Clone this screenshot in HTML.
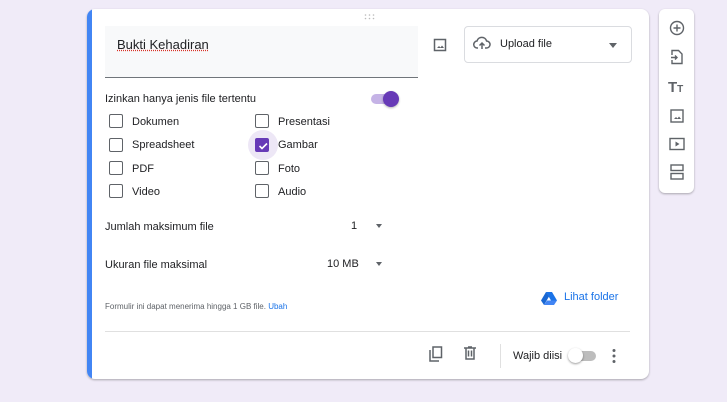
<!DOCTYPE html><html><head><style>
body{margin:0;width:727px;height:407px;background:#fff;font-family:"Liberation Sans",Arial,sans-serif;position:relative;overflow:hidden;color:#202124}
.bg{position:absolute;left:0;top:0;width:727px;height:402px;background:#f0ebf8}
.a{position:absolute}
.card{left:87px;top:9px;width:562px;height:370px;background:#fff;border-radius:8px;box-shadow:0 1px 2px rgba(0,0,0,.3);overflow:hidden}
.bar{left:0;top:0;width:5px;height:370px;background:#4285f4}
.t{font-size:11px;position:absolute}
.cb{position:absolute;width:12px;height:12px;border:1.7px solid #5f6368;border-radius:2px}
.side{left:659px;top:9px;width:35px;height:184px;background:#fff;border-radius:6px;box-shadow:0 1px 2px rgba(0,0,0,.3)}
</style></head><body>
<div class="bg"></div>
<div class="a card">
<div class="a bar"></div>
<svg class="a" style="left:277px;top:5px" width="12" height="6" viewBox="0 0 12 6"><g fill="#bbb"><circle cx="1.5" cy="1" r=".8"/><circle cx="5.5" cy="1" r=".8"/><circle cx="9.5" cy="1" r=".8"/><circle cx="1.5" cy="4.5" r=".8"/><circle cx="5.5" cy="4.5" r=".8"/><circle cx="9.5" cy="4.5" r=".8"/></g></svg>
<div class="a" style="left:18px;top:17px;width:313px;height:51px;background:#f8f9fa;border-bottom:1px solid #70757a"></div>
<div class="a" style="left:30px;top:28px;font-size:13px;text-decoration:underline dotted #d93025">Bukti Kehadiran</div>
<svg class="a" style="left:346px;top:29px" width="14" height="14" viewBox="0 0 14 14"><rect x="1.5" y="1.5" width="11" height="11" fill="none" stroke="#5f6368" stroke-width="1.5"/><path d="M4 10l2-2 1.5 1.5 1.5-2 2 2.5z" fill="#5f6368"/></svg>
<div class="a" style="left:377px;top:17px;width:166px;height:35px;border:1px solid #dadce0;border-radius:4px"></div>
<svg class="a" style="left:386px;top:27px" width="18" height="14" viewBox="0 0 18 14"><path d="M5 12H4.5a3.5 3.5 0 0 1-.5-7A5 5 0 0 1 13.6 5 3.5 3.5 0 0 1 13.5 12H12" fill="none" stroke="#5f6368" stroke-width="1.5"/><path d="M9 13V7M6.5 9.5L9 7l2.5 2.5" fill="none" stroke="#5f6368" stroke-width="1.5"/></svg>
<div class="t" style="left:413px;top:29px">Upload file</div>
<div class="a" style="left:522px;top:34px;border:4px solid transparent;border-top:5px solid #5f6368;border-bottom:0"></div>
<div class="t" style="left:18px;top:84px">Izinkan hanya jenis file tertentu</div>
<div class="a" style="left:284px;top:85px;width:26px;height:10px;border-radius:5px;background:#c5b3e6"></div>
<div class="a" style="left:296px;top:82px;width:16px;height:16px;border-radius:50%;background:#673ab7;box-shadow:0 1px 2px rgba(0,0,0,.3)"></div>
<div class="cb" style="left:22px;top:105px"></div><div class="t" style="left:45px;top:107px">Dokumen</div>
<div class="cb" style="left:22px;top:129px"></div><div class="t" style="left:45px;top:130px">Spreadsheet</div>
<div class="cb" style="left:22px;top:152px"></div><div class="t" style="left:45px;top:154px">PDF</div>
<div class="cb" style="left:22px;top:175px"></div><div class="t" style="left:45px;top:177px">Video</div>
<div class="cb" style="left:168px;top:105px"></div><div class="t" style="left:191px;top:107px">Presentasi</div>
<div class="a" style="left:161px;top:121px;width:30px;height:30px;border-radius:50%;background:#ede7f6"></div>
<div class="cb" style="left:168px;top:129px;background:#673ab7;border-color:#673ab7"></div>
<svg class="a" style="left:170px;top:131px" width="12" height="12" viewBox="0 0 12 12"><path d="M2.5 6l2.5 2.5L10 3.5" fill="none" stroke="#fff" stroke-width="1.6"/></svg>
<div class="t" style="left:191px;top:130px">Gambar</div>
<div class="cb" style="left:168px;top:152px"></div><div class="t" style="left:191px;top:154px">Foto</div>
<div class="cb" style="left:168px;top:175px"></div><div class="t" style="left:191px;top:177px">Audio</div>
<div class="t" style="left:18px;top:212px">Jumlah maksimum file</div>
<div class="t" style="left:264px;top:211px">1</div>
<div class="a" style="left:289px;top:215px;border:3.5px solid transparent;border-top:4px solid #5f6368;border-bottom:0"></div>
<div class="t" style="left:18px;top:250px">Ukuran file maksimal</div>
<div class="t" style="left:240px;top:249px">10 MB</div>
<div class="a" style="left:289px;top:253px;border:3.5px solid transparent;border-top:4px solid #5f6368;border-bottom:0"></div>
<div class="a" style="left:18px;top:293px;font-size:8px;color:#5f6368">Formulir ini dapat menerima hingga 1 GB file. <span style="color:#1a73e8">Ubah</span></div>
<svg class="a" style="left:454px;top:282px" width="16" height="14" viewBox="0 0 16 14"><path d="M5 1h6l5 8.5h-6z" fill="#1a73e8"/><path d="M5 1L0 9.5l3 4.5 5-8.5z" fill="#1967d2"/><path d="M3 14h10l3-4.5H6z" fill="#4285f4"/></svg>
<div class="a" style="left:477px;top:282px;font-size:11px;color:#1a73e8">Lihat folder</div>
<div class="a" style="left:18px;top:322px;width:525px;height:1px;background:#e0e0e0"></div>
<svg class="a" style="left:342px;top:337px" width="14" height="16" viewBox="0 0 14 16"><path d="M1 4v11h9" fill="none" stroke="#5f6368" stroke-width="1.5"/><rect x="4" y="1" width="8.5" height="10.5" fill="none" stroke="#5f6368" stroke-width="1.5"/></svg>
<svg class="a" style="left:377px;top:337px" width="12" height="14" viewBox="0 0 12 14"><path d="M0 2h12M4 1h4M2 2v11h8V2M4.5 4.5v6M7.5 4.5v6" fill="none" stroke="#5f6368" stroke-width="1.5"/></svg>
<div class="a" style="left:413px;top:335px;width:1px;height:24px;background:#e0e0e0"></div>
<div class="t" style="left:426px;top:341px">Wajib diisi</div>
<div class="a" style="left:485px;top:342px;width:24px;height:10px;border-radius:5px;background:#bdbdbd"></div>
<div class="a" style="left:481px;top:339px;width:15px;height:15px;border-radius:50%;background:#fff;box-shadow:0 1px 2px rgba(0,0,0,.4)"></div>
<svg class="a" style="left:524px;top:339px" width="6" height="16" viewBox="0 0 6 16"><circle cx="3" cy="2.5" r="1.5" fill="#5f6368"/><circle cx="3" cy="8" r="1.5" fill="#5f6368"/><circle cx="3" cy="13.5" r="1.5" fill="#5f6368"/></svg>
</div>
<div class="a side">
<svg class="a" style="left:10px;top:11px" width="16" height="16" viewBox="0 0 16 16"><circle cx="8" cy="8" r="6.5" fill="none" stroke="#5f6368" stroke-width="1.4"/><path d="M8 4.5v7M4.5 8h7" stroke="#5f6368" stroke-width="1.4"/></svg>
<svg class="a" style="left:11px;top:40px" width="14" height="16" viewBox="0 0 14 16"><path d="M2 6V1.5h6.5l3.5 3.5v9.5H2V11M1 8.5h6M5 6.5l2 2-2 2" fill="none" stroke="#5f6368" stroke-width="1.4"/></svg>
<div class="a" style="left:9px;top:70px;font-size:15px;font-weight:bold;color:#5f6368">T<span style="font-size:10px">T</span></div>
<svg class="a" style="left:11px;top:100px" width="14" height="14" viewBox="0 0 14 14"><rect x="1" y="1" width="12" height="12" fill="none" stroke="#5f6368" stroke-width="1.4"/><path d="M4 10l2-2 1.5 1.5 1.5-2 2 2.5z" fill="#5f6368"/></svg>
<svg class="a" style="left:10px;top:128px" width="16" height="14" viewBox="0 0 16 14"><rect x="1" y="1.5" width="14" height="11" fill="none" stroke="#5f6368" stroke-width="1.4"/><path d="M6.5 4.5v5l4-2.5z" fill="#5f6368"/></svg>
<svg class="a" style="left:11px;top:155px" width="14" height="16" viewBox="0 0 14 16"><rect x="1" y="1" width="12" height="5.5" fill="none" stroke="#5f6368" stroke-width="1.4"/><rect x="1" y="9.5" width="12" height="5.5" fill="none" stroke="#5f6368" stroke-width="1.4"/></svg>
</div>
</body></html>
